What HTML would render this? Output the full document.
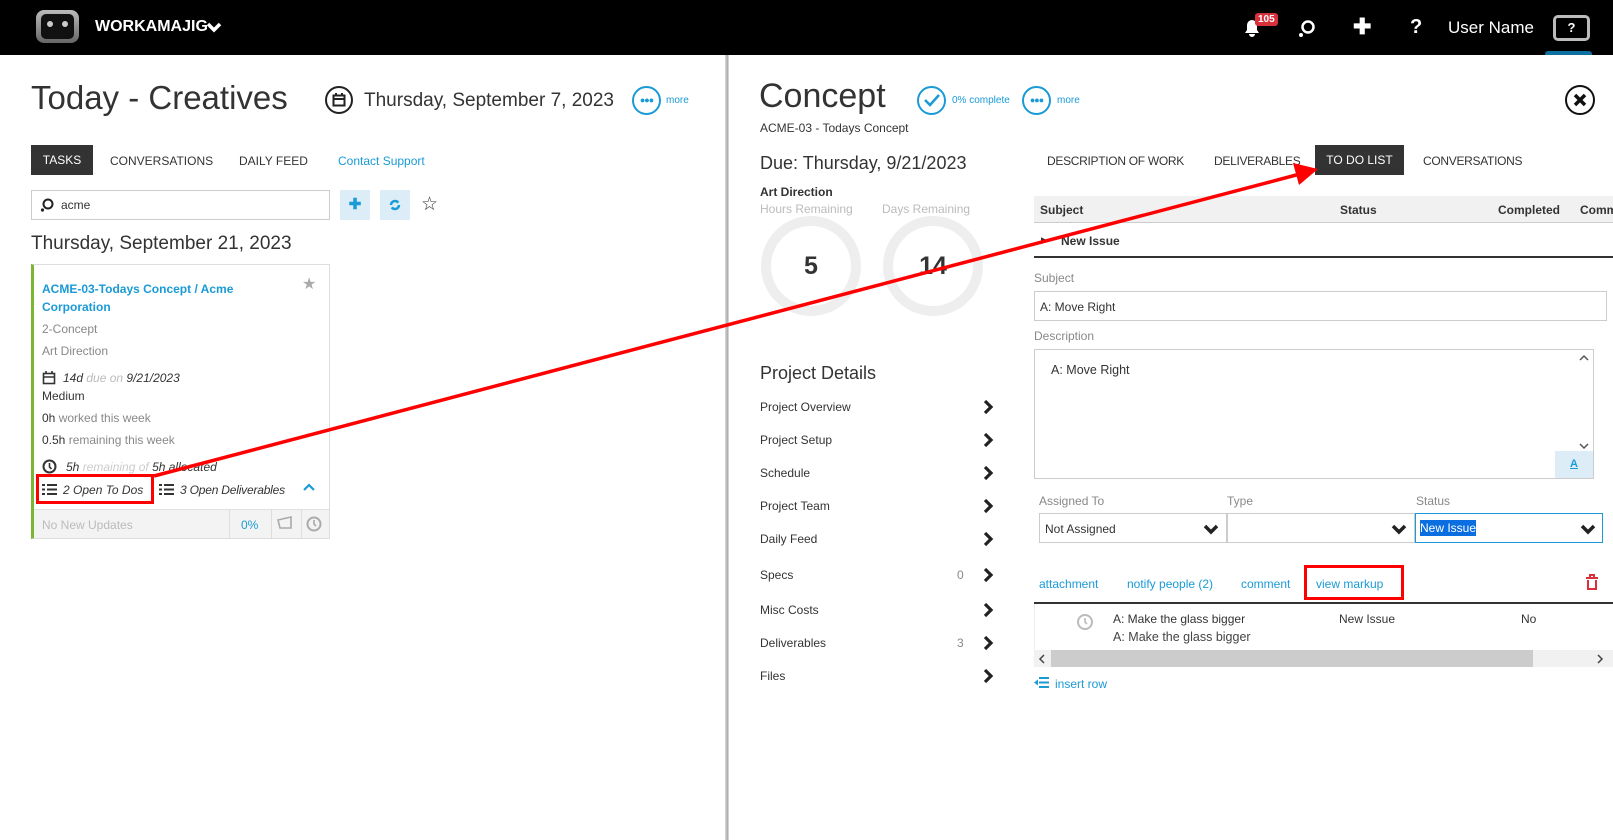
<!DOCTYPE html>
<html><head><meta charset="utf-8"><style>
*{box-sizing:border-box;margin:0;padding:0}
body{width:1613px;height:840px;position:relative;overflow:hidden;background:#fff;font-family:"Liberation Sans",Arial,sans-serif;color:#333}
.a{position:absolute;white-space:nowrap}
.top{position:absolute;left:0;top:0;width:1613px;height:55px;background:#000}
.w{color:#fff}
.tab{font-size:12px;color:#333}
.blue{color:#1a9ad6}
.tabon{background:#333;color:#fff;text-align:center;line-height:30px}
.g{color:#888}
.in{border:1px solid #ccc;background:#fff}
</style></head><body>
<div class="top"></div>
<div class="a" style="left:36px;top:10px;width:43px;height:33px;border-radius:8px;background:linear-gradient(#bbb,#666);"></div>
<div class="a" style="left:41px;top:14px;width:33px;height:25px;border-radius:5px;background:#111"></div>
<div class="a" style="left:47px;top:21px;width:6px;height:6px;border-radius:3px;background:#ccc"></div>
<div class="a" style="left:62px;top:21px;width:6px;height:6px;border-radius:3px;background:#ccc"></div>
<div class="a w" style="left:95px;top:18px;font-size:16px;font-weight:bold">WORKAMAJIG</div>
<svg class="a" style="left:206px;top:21px" width="16" height="12"><path d="M2 3l6 6 6-6" stroke="#fff" stroke-width="3.5" fill="none"/></svg>
<svg class="a" style="left:1242px;top:17px" width="20" height="22"><path d="M3 16h14l-2-3V8a5 5 0 0 0-10 0v5z M7 17a3 3 0 0 0 6 0z" fill="#fff"/></svg>
<div class="a" style="left:1255px;top:13px;background:#d9313c;color:#fff;font-size:10px;font-weight:bold;padding:0 3px;border-radius:3px;line-height:13px">105</div>
<svg class="a" style="left:1297px;top:18px" width="20" height="20"><circle cx="11" cy="9" r="5.5" stroke="#fff" stroke-width="2.5" fill="none"/><circle cx="4" cy="17" r="2" fill="#fff"/></svg>
<div class="a w" style="left:1353px;top:14px;font-size:22px;font-weight:bold">&#10010;</div>
<div class="a w" style="left:1410px;top:16px;font-size:20px;font-weight:bold">?</div>
<div class="a w" style="left:1448px;top:18px;font-size:17px">User Name</div>
<div class="a" style="left:1553px;top:15px;width:37px;height:26px;border:3px solid #bbb;border-radius:5px;color:#fff;font-size:13px;font-weight:bold;text-align:center;line-height:20px">?</div>
<div class="a" style="left:1545px;top:51px;width:47px;height:4px;background:#0f6fa0;border-radius:3px 3px 0 0"></div>

<div class="a" style="left:31px;top:79px;font-size:33px">Today - Creatives</div>
<div class="a" style="left:325px;top:86px;width:28px;height:28px;border:2px solid #222;border-radius:50%"></div>
<svg class="a" style="left:332px;top:93px" width="14" height="14"><rect x="1.5" y="2.5" width="11" height="10" stroke="#222" stroke-width="2" fill="none"/><path d="M1.5 6h11M4 0v3M10 0v3" stroke="#222" stroke-width="2"/></svg>
<div class="a" style="left:364px;top:90px;font-size:19px">Thursday, September 7, 2023</div>
<div class="a" style="left:632px;top:86px;width:29px;height:29px;border:2px solid #1a9ad6;border-radius:50%;color:#1a9ad6;font-size:9px;text-align:center;line-height:24px;letter-spacing:-1px">&#9679;&#9679;&#9679;</div>
<div class="a blue" style="left:666px;top:95px;font-size:10px">more</div>

<div class="a tabon" style="left:31px;top:145px;width:62px;height:30px;font-size:12px">TASKS</div>
<div class="a tab" style="left:110px;top:154px">CONVERSATIONS</div>
<div class="a tab" style="left:239px;top:154px">DAILY FEED</div>
<div class="a tab blue" style="left:338px;top:154px">Contact Support</div>

<div class="a in" style="left:31px;top:190px;width:299px;height:30px"></div>
<svg class="a" style="left:39px;top:197px" width="16" height="16"><circle cx="9" cy="7" r="4.5" stroke="#222" stroke-width="2" fill="none"/><circle cx="3.5" cy="13" r="1.6" fill="#222"/></svg>
<div class="a" style="left:61px;top:198px;font-size:12px">acme</div>
<div class="a" style="left:340px;top:190px;width:30px;height:30px;background:#dcedf8;color:#1a9ad6;text-align:center;line-height:30px;font-size:15px;font-weight:bold">&#10010;</div>
<div class="a" style="left:380px;top:190px;width:30px;height:30px;background:#dcedf8"></div>
<svg class="a" style="left:388px;top:198px" width="14" height="14"><circle cx="7" cy="7" r="4" stroke="#1a9ad6" stroke-width="2.5" fill="none" stroke-dasharray="10 2.5"/></svg>
<div class="a" style="left:421px;top:193px;font-size:19px;color:#333">&#9734;</div>
<div class="a" style="left:31px;top:233px;font-size:19px">Thursday, September 21, 2023</div>

<div class="a" style="left:31px;top:264px;width:299px;height:275px;border:1px solid #ddd;border-left:3px solid #7bb534"></div>
<div class="a" style="left:34px;top:509px;width:295px;height:29px;background:#f3f3f3;border-top:1px solid #e0e0e0"></div>
<div class="a" style="left:42px;top:280px;font-size:12px;font-weight:bold;color:#1a9ad6;line-height:18px">ACME-03-Todays Concept / Acme<br>Corporation</div>
<div class="a" style="left:302px;top:274px;font-size:16px;color:#aaa">&#9733;</div>
<div class="a g" style="left:42px;top:322px;font-size:12px">2-Concept</div>
<div class="a g" style="left:42px;top:344px;font-size:12px">Art Direction</div>
<svg class="a" style="left:42px;top:371px" width="14" height="14"><rect x="1.5" y="2.5" width="11" height="10" stroke="#333" stroke-width="1.6" fill="none"/><path d="M1.5 6h11M4 0v3M10 0v3" stroke="#333" stroke-width="1.6"/></svg>
<div class="a" style="left:63px;top:371px;font-size:12px;font-style:italic">14d <span style="color:#bbb">due on</span> 9/21/2023</div>
<div class="a" style="left:42px;top:389px;font-size:12px">Medium</div>
<div class="a" style="left:42px;top:411px;font-size:12px">0h <span class="g">worked this week</span></div>
<div class="a" style="left:42px;top:433px;font-size:12px">0.5h <span class="g">remaining this week</span></div>
<svg class="a" style="left:42px;top:459px" width="15" height="15"><circle cx="7.5" cy="7.5" r="6" stroke="#333" stroke-width="2" fill="none"/><path d="M7.5 4v4l2 2" stroke="#333" stroke-width="1.6" fill="none"/></svg>
<div class="a" style="left:66px;top:460px;font-size:12px;font-style:italic">5h <span style="color:#ccc">remaining of</span> 5h allocated</div>
<svg class="a" style="left:42px;top:483px" width="15" height="13"><path d="M0 2h3M5 2h10M0 6.5h3M5 6.5h10M0 11h3M5 11h10" stroke="#333" stroke-width="2"/></svg>
<div class="a" style="left:63px;top:483px;font-size:12px;font-style:italic">2 Open To Dos</div>
<svg class="a" style="left:159px;top:483px" width="15" height="13"><path d="M0 2h3M5 2h10M0 6.5h3M5 6.5h10M0 11h3M5 11h10" stroke="#333" stroke-width="2"/></svg>
<div class="a" style="left:180px;top:483px;font-size:12px;font-style:italic;letter-spacing:-0.2px">3 Open Deliverables</div>
<svg class="a" style="left:303px;top:483px" width="12" height="9"><path d="M1 7l5-5 5 5" stroke="#1a9ad6" stroke-width="2.2" fill="none"/></svg>
<div class="a" style="left:42px;top:518px;font-size:12px;color:#bbb">No New Updates</div>
<div class="a" style="left:229px;top:509px;width:1px;height:29px;background:#ddd"></div>
<div class="a blue" style="left:241px;top:518px;font-size:12px">0%</div>
<div class="a" style="left:271px;top:509px;width:1px;height:29px;background:#ddd"></div>
<svg class="a" style="left:277px;top:516px" width="16" height="14"><path d="M1 4l13-3v11H3z" stroke="#aaa" stroke-width="1.6" fill="none"/></svg>
<div class="a" style="left:301px;top:509px;width:1px;height:29px;background:#ddd"></div>
<svg class="a" style="left:306px;top:516px" width="16" height="16"><circle cx="8" cy="8" r="6.5" stroke="#aaa" stroke-width="2" fill="none"/><path d="M8 4v4l2 2" stroke="#aaa" stroke-width="1.6" fill="none"/></svg>
<div class="a" style="left:36px;top:474px;width:118px;height:30px;border:3px solid #f00"></div>

<div class="a" style="left:725px;top:55px;width:4px;height:785px;background:linear-gradient(90deg,#ddd,#aaa 60%,#e5e5e5)"></div>
<div class="a" style="left:759px;top:77px;font-size:34px;color:#333">Concept</div>
<div class="a" style="left:917px;top:86px;width:29px;height:29px;border:2px solid #1a9ad6;border-radius:50%"></div>
<svg class="a" style="left:923px;top:93px" width="17" height="15"><path d="M2 7l5 5 9-10" stroke="#1a9ad6" stroke-width="2.5" fill="none"/></svg>
<div class="a blue" style="left:952px;top:95px;font-size:10px">0% complete</div>
<div class="a" style="left:1022px;top:86px;width:29px;height:29px;border:2px solid #1a9ad6;border-radius:50%;color:#1a9ad6;font-size:9px;text-align:center;line-height:24px;letter-spacing:-1px">&#9679;&#9679;&#9679;</div>
<div class="a blue" style="left:1057px;top:95px;font-size:10px">more</div>
<div class="a" style="left:1565px;top:85px;width:30px;height:30px;border:2.5px solid #111;border-radius:50%"></div>
<svg class="a" style="left:1572px;top:92px" width="16" height="16"><path d="M3 3l10 10M13 3L3 13" stroke="#111" stroke-width="3.5"/></svg>
<div class="a" style="left:760px;top:121px;font-size:12px">ACME-03 - Todays Concept</div>
<div class="a" style="left:760px;top:153px;font-size:18px">Due: Thursday, 9/21/2023</div>
<div class="a" style="left:760px;top:185px;font-size:12px;font-weight:bold">Art Direction</div>
<div class="a" style="left:760px;top:202px;font-size:12px;color:#bbb">Hours Remaining</div>
<div class="a" style="left:882px;top:202px;font-size:12px;color:#bbb">Days Remaining</div>
<div class="a" style="left:761px;top:216px;width:100px;height:100px;border:10px solid #eee;border-radius:50%;text-align:center;line-height:80px;font-size:25px;font-weight:bold">5</div>
<div class="a" style="left:883px;top:216px;width:100px;height:100px;border:10px solid #eee;border-radius:50%;text-align:center;line-height:80px;font-size:25px;font-weight:bold">14</div>

<div class="a" style="left:760px;top:363px;font-size:18px">Project Details</div>
<div class="a" style="left:760px;top:400px;font-size:12px">Project Overview</div>
<div class="a" style="left:760px;top:433px;font-size:12px">Project Setup</div>
<div class="a" style="left:760px;top:466px;font-size:12px">Schedule</div>
<div class="a" style="left:760px;top:499px;font-size:12px">Project Team</div>
<div class="a" style="left:760px;top:532px;font-size:12px">Daily Feed</div>
<div class="a" style="left:760px;top:568px;font-size:12px">Specs</div>
<div class="a" style="left:760px;top:603px;font-size:12px">Misc Costs</div>
<div class="a" style="left:760px;top:636px;font-size:12px">Deliverables</div>
<div class="a" style="left:760px;top:669px;font-size:12px">Files</div>
<div class="a g" style="left:957px;top:568px;font-size:12px">0</div>
<div class="a g" style="left:957px;top:636px;font-size:12px">3</div>
<svg class="a" style="left:982px;top:399px" width="12" height="290"><g stroke="#222" stroke-width="3.2" fill="none"><path d="M3 2l6 6-6 6"/><path d="M3 35l6 6-6 6"/><path d="M3 68l6 6-6 6"/><path d="M3 101l6 6-6 6"/><path d="M3 134l6 6-6 6"/><path d="M3 170l6 6-6 6"/><path d="M3 205l6 6-6 6"/><path d="M3 238l6 6-6 6"/><path d="M3 271l6 6-6 6"/></g></svg>

<div class="a tab" style="left:1047px;top:154px;letter-spacing:-0.3px">DESCRIPTION OF WORK</div>
<div class="a tab" style="left:1214px;top:154px;letter-spacing:-0.3px">DELIVERABLES</div>
<div class="a tabon" style="left:1315px;top:145px;width:89px;height:30px;font-size:12px">TO DO LIST</div>
<div class="a tab" style="left:1423px;top:154px;letter-spacing:-0.3px">CONVERSATIONS</div>

<div class="a" style="left:1034px;top:196px;width:579px;height:27px;background:#f1f1f1;border-bottom:1px solid #ccc"></div>
<div class="a" style="left:1040px;top:203px;font-size:12px;font-weight:bold">Subject</div>
<div class="a" style="left:1340px;top:203px;font-size:12px;font-weight:bold">Status</div>
<div class="a" style="left:1498px;top:203px;font-size:12px;font-weight:bold">Completed</div>
<div class="a" style="left:1580px;top:203px;font-size:12px;font-weight:bold">Comm</div>
<div class="a" style="left:1041px;top:235px;font-size:9px">&#9654;</div>
<div class="a" style="left:1061px;top:234px;font-size:12px;font-weight:bold">New Issue</div>
<div class="a" style="left:1034px;top:256px;width:579px;height:2px;background:#333"></div>

<div class="a g" style="left:1034px;top:271px;font-size:12px">Subject</div>
<div class="a in" style="left:1034px;top:291px;width:573px;height:30px"></div>
<div class="a" style="left:1040px;top:300px;font-size:12px">A: Move Right</div>
<div class="a g" style="left:1034px;top:329px;font-size:12px">Description</div>
<div class="a in" style="left:1034px;top:349px;width:560px;height:130px"></div>
<svg class="a" style="left:1578px;top:352px" width="12" height="100"><path d="M2 8l4-4 4 4M2 92l4 4 4-4" stroke="#555" stroke-width="1.5" fill="none"/></svg>
<div class="a" style="left:1555px;top:451px;width:38px;height:27px;background:#dcedf8;color:#1a9ad6;font-size:11px;text-align:center;line-height:27px;text-decoration:underline;font-weight:bold">A</div>
<div class="a" style="left:1051px;top:363px;font-size:12.5px">A: Move Right</div>

<div class="a g" style="left:1039px;top:494px;font-size:12px">Assigned To</div>
<div class="a g" style="left:1227px;top:494px;font-size:12px">Type</div>
<div class="a g" style="left:1416px;top:494px;font-size:12px">Status</div>
<div class="a in" style="left:1039px;top:513px;width:188px;height:30px"></div>
<div class="a" style="left:1045px;top:522px;font-size:12px">Not Assigned</div>
<div class="a in" style="left:1227px;top:513px;width:188px;height:30px"></div>
<div class="a" style="left:1415px;top:513px;width:188px;height:30px;border:1px solid #1a9ad6"></div>
<div class="a" style="left:1420px;top:520px;font-size:12px;background:#0a6ee0;color:#fff;padding:1px 0">New Issue</div>
<svg class="a" style="left:1203px;top:523px" width="16" height="12"><path d="M2 3l6 6 6-6" stroke="#222" stroke-width="3.5" fill="none"/></svg>
<svg class="a" style="left:1391px;top:523px" width="16" height="12"><path d="M2 3l6 6 6-6" stroke="#222" stroke-width="3.5" fill="none"/></svg>
<svg class="a" style="left:1580px;top:523px" width="16" height="12"><path d="M2 3l6 6 6-6" stroke="#222" stroke-width="3.5" fill="none"/></svg>

<div class="a blue" style="left:1039px;top:577px;font-size:12px">attachment</div>
<div class="a blue" style="left:1127px;top:577px;font-size:12px">notify people (2)</div>
<div class="a blue" style="left:1241px;top:577px;font-size:12px">comment</div>
<div class="a blue" style="left:1316px;top:577px;font-size:12px">view markup</div>
<div class="a" style="left:1304px;top:565px;width:100px;height:35px;border:3px solid #f00"></div>
<svg class="a" style="left:1585px;top:574px" width="14" height="16"><path d="M1 4h12M5 4V1h4v3M3 6v9h8V6" stroke="#d9313c" stroke-width="2" fill="none"/></svg>
<div class="a" style="left:1034px;top:602px;width:579px;height:2px;background:#333"></div>
<div class="a" style="left:1034px;top:604px;width:579px;height:46px;border-left:1px solid #eee"></div>
<svg class="a" style="left:1076px;top:613px" width="18" height="18"><circle cx="9" cy="9" r="7" stroke="#bbb" stroke-width="2" fill="none"/><path d="M9 5v4l2 2" stroke="#bbb" stroke-width="1.6" fill="none"/></svg>
<div class="a" style="left:1113px;top:612px;font-size:12px">A: Make the glass bigger</div>
<div class="a" style="left:1113px;top:630px;font-size:12.5px;color:#444">A: Make the glass bigger</div>
<div class="a" style="left:1339px;top:612px;font-size:12px">New Issue</div>
<div class="a" style="left:1521px;top:612px;font-size:12px">No</div>
<div class="a" style="left:1034px;top:650px;width:579px;height:17px;background:#f1f1f1"></div>
<div class="a" style="left:1051px;top:650px;width:482px;height:17px;background:#ccc"></div>
<svg class="a" style="left:1037px;top:653px" width="10" height="12"><path d="M7 2L3 6l4 4" stroke="#444" stroke-width="1.5" fill="none"/></svg>
<svg class="a" style="left:1595px;top:653px" width="10" height="12"><path d="M3 2l4 4-4 4" stroke="#444" stroke-width="1.5" fill="none"/></svg>
<svg class="a" style="left:1034px;top:676px" width="16" height="13"><path d="M5 2h10M5 6.5h10M5 11h10" stroke="#1a9ad6" stroke-width="2"/><path d="M0 6.5l4-3v6z" fill="#1a9ad6"/></svg>
<div class="a blue" style="left:1055px;top:677px;font-size:12px">insert row</div>

<svg class="a" style="left:0;top:0" width="1613" height="840"><line x1="154" y1="476" x2="1300" y2="174" stroke="#f00" stroke-width="3.5"/><polygon points="1318,169 1293,163 1299,185" fill="#f00"/></svg>
</body></html>
